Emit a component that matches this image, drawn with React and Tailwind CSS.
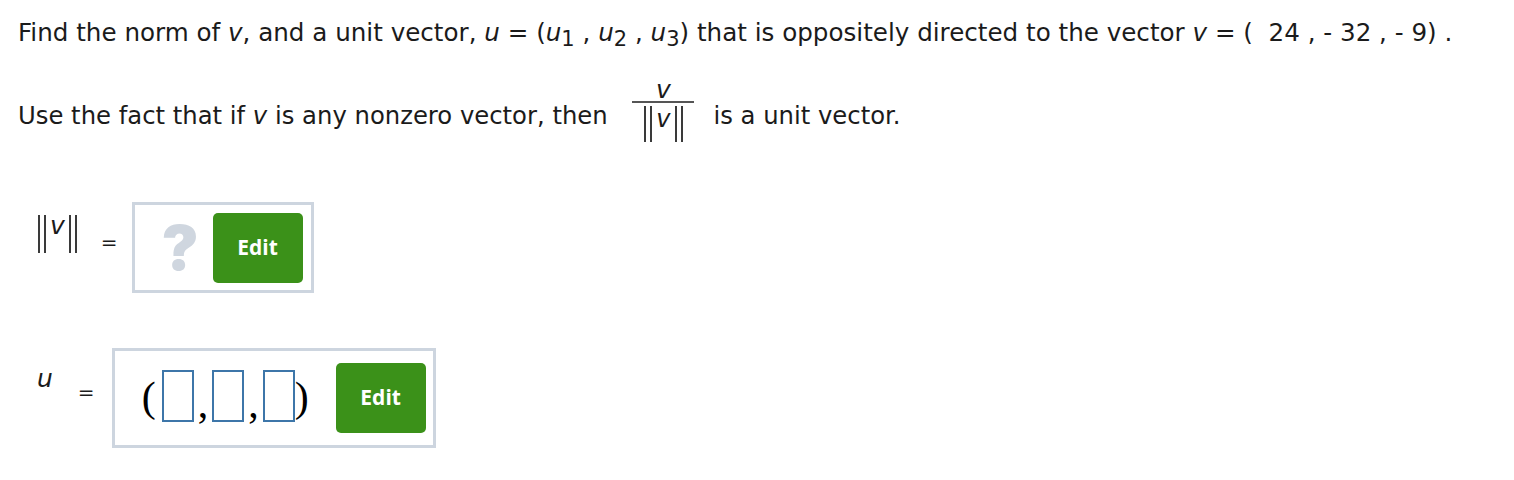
import React from "react";

function NormBars({ vClass = "", bar = "h-[36px]" }) {
  return (
    <span className="inline-flex items-start">
      <span className={`w-[2px] bg-[#3a3a3a] ${bar}`} />
      <span className="w-[4px]" />
      <span className={`w-[2px] bg-[#3a3a3a] ${bar}`} />
      <span className={`italic px-[4px] ${vClass}`}>v</span>
      <span className={`w-[2px] bg-[#3a3a3a] ${bar}`} />
      <span className="w-[4px]" />
      <span className={`w-[2px] bg-[#3a3a3a] ${bar}`} />
    </span>
  );
}

function EditButton() {
  return (
    <button className="w-[90px] h-[70px] rounded-[5px] bg-[#3b9119] text-white text-[21px] font-bold flex items-center justify-center font-['Open_Sans',sans-serif]">
      Edit
    </button>
  );
}

function Slot() {
  return <span className="block w-[32px] h-[52px] border-[2px] border-[#3d76a9]" />;
}

export default function App() {
  return (
    <div className="bg-white w-[1514px] h-[480px] pl-[18px] text-[#1b1b1b] font-['DejaVu_Sans',Verdana,sans-serif]">
      <div className="pt-[15px] h-[51px] text-[24.6px] leading-[36px] whitespace-pre">
        Find the norm of <i>v</i>, and a unit vector, <i>u</i> = (<i>u</i><sub className="text-[21px]">1</sub> , <i>u</i><sub className="text-[21px]">2</sub> , <i>u</i><sub className="text-[21px]">3</sub>) that is oppositely directed to the vector <i>v</i> = (  24 , - 32 , - 9) .
      </div>

      <div className="mt-[32px] h-[65px] flex items-center text-[24.3px] leading-[36px] whitespace-pre">
        <span>Use the fact that if <i>v</i> is any nonzero vector, then </span>
        <span className="ml-[17px] w-[62px] flex flex-col items-center">
          <span className="italic font-medium text-[25px] leading-[22px] h-[22px]">v</span>
          <span className="block w-[62px] h-[2px] bg-[#555]" />
          <span className="mt-[3px]"><NormBars vClass="mt-[2px] text-[24px] leading-[22px] font-medium" /></span>
        </span>
        <span className="ml-[19px]">is a unit vector.</span>
      </div>

      <div className="mt-[54px] flex items-start">
        <span className="ml-[20px] mt-[13px]"><NormBars bar="h-[38px]" vClass="text-[25px] leading-[22px] font-medium" /></span>
        <span className="ml-[24px] mt-[28px] text-[20px] leading-[24px]">=</span>
        <div className="ml-[14px] w-[182px] h-[91px] border-[3px] border-[#cdd5df] flex items-center pl-[27px] pr-[8px]">
          <span className="text-[62px] leading-none font-black text-[#cfd6df] font-['Inter',sans-serif]">?</span>
          <span className="ml-auto"><EditButton /></span>
        </div>
      </div>

      <div className="mt-[55px] flex items-start">
        <span className="ml-[19px] mt-[19px] italic font-medium text-[25px] leading-[24px]">u</span>
        <span className="ml-[25px] mt-[32px] text-[20px] leading-[24px]">=</span>
        <div className="ml-[17px] w-[324px] h-[100px] border-[3px] border-[#cdd5df] flex items-center pl-[27px] pr-[7px]">
          <span className="flex items-center text-[42px] leading-none text-black font-['Liberation_Serif',serif]">
            <span className="mr-[6px] -mt-[2px]">(</span>
            <span className="-mt-[4px]"><Slot /></span>
            <span className="mt-[10px] mx-[4px]">,</span>
            <span className="-mt-[4px]"><Slot /></span>
            <span className="mt-[10px] mx-[4px]">,</span>
            <span className="-mt-[4px]"><Slot /></span>
            <span className="-mt-[2px]">)</span>
          </span>
          <span className="ml-auto"><EditButton /></span>
        </div>
      </div>
    </div>
  );
}
